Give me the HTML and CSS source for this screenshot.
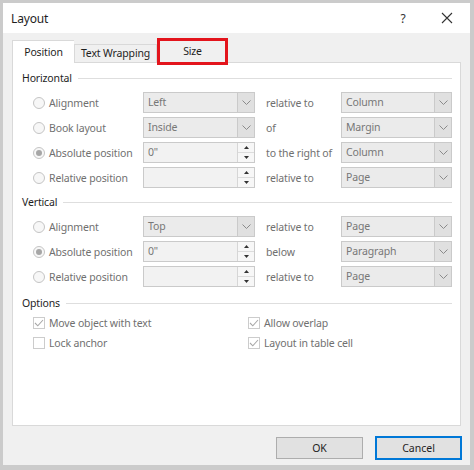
FILE: index.html
```html
<!DOCTYPE html>
<html lang="en">
<head>
    <meta charset="UTF-8">
    <meta name="viewport" content="width=device-width, initial-scale=1.0">
    <title>Layout</title>
    <link rel="stylesheet" href="styles.css">
</head>
<body>
    <div class="dialog">
        <div class="titlebar">
            <span class="title">Layout</span>
            <span class="help">?</span>
            <span class="close">
                <svg width="12" height="12" viewBox="0 0 12 12"><path d="M1 1 L11 11 M11 1 L1 11" stroke="#333" stroke-width="1.1" fill="none"/></svg>
            </span>
        </div>

        <div class="tabs">
            <div class="tab active">Position</div>
            <div class="tab">Text Wrapping</div>
            <div class="tab marked">Size</div>
        </div>

        <div class="panel">
            <div class="heading"><span>Horizontal</span><i></i></div>
            <div class="row">
                <label class="opt"><span class="radio"></span>Alignment</label>
                <div class="combo"><span class="val">Left</span><span class="drop"><svg width="9" height="5" viewBox="0 0 9 5"><path d="M0.5 0.5 L4.5 4.5 L8.5 0.5" stroke="#8a8a8a" fill="none"/></svg></span></div>
                <span class="rel">relative to</span>
                <div class="combo"><span class="val">Column</span><span class="drop"><svg width="9" height="5" viewBox="0 0 9 5"><path d="M0.5 0.5 L4.5 4.5 L8.5 0.5" stroke="#8a8a8a" fill="none"/></svg></span></div>
            </div>
            <div class="row">
                <label class="opt"><span class="radio"></span>Book layout</label>
                <div class="combo"><span class="val">Inside</span><span class="drop"><svg width="9" height="5" viewBox="0 0 9 5"><path d="M0.5 0.5 L4.5 4.5 L8.5 0.5" stroke="#8a8a8a" fill="none"/></svg></span></div>
                <span class="rel">of</span>
                <div class="combo"><span class="val">Margin</span><span class="drop"><svg width="9" height="5" viewBox="0 0 9 5"><path d="M0.5 0.5 L4.5 4.5 L8.5 0.5" stroke="#8a8a8a" fill="none"/></svg></span></div>
            </div>
            <div class="row">
                <label class="opt"><span class="radio checked"></span>Absolute position</label>
                <div class="spin"><span class="val">0"</span><span class="arrows"><span><svg width="5" height="3" viewBox="0 0 5 3"><path d="M0 3 L2.5 0 L5 3 Z" fill="#333"/></svg></span><span><svg width="5" height="3" viewBox="0 0 5 3"><path d="M0 0 L2.5 3 L5 0 Z" fill="#333"/></svg></span></span></div>
                <span class="rel">to the right of</span>
                <div class="combo"><span class="val">Column</span><span class="drop"><svg width="9" height="5" viewBox="0 0 9 5"><path d="M0.5 0.5 L4.5 4.5 L8.5 0.5" stroke="#8a8a8a" fill="none"/></svg></span></div>
            </div>
            <div class="row">
                <label class="opt"><span class="radio"></span>Relative position</label>
                <div class="spin"><span class="val"></span><span class="arrows"><span><svg width="5" height="3" viewBox="0 0 5 3"><path d="M0 3 L2.5 0 L5 3 Z" fill="#333"/></svg></span><span><svg width="5" height="3" viewBox="0 0 5 3"><path d="M0 0 L2.5 3 L5 0 Z" fill="#333"/></svg></span></span></div>
                <span class="rel">relative to</span>
                <div class="combo"><span class="val">Page</span><span class="drop"><svg width="9" height="5" viewBox="0 0 9 5"><path d="M0.5 0.5 L4.5 4.5 L8.5 0.5" stroke="#8a8a8a" fill="none"/></svg></span></div>
            </div>

            <div class="heading second"><span>Vertical</span><i></i></div>
            <div class="row">
                <label class="opt"><span class="radio"></span>Alignment</label>
                <div class="combo"><span class="val">Top</span><span class="drop"><svg width="9" height="5" viewBox="0 0 9 5"><path d="M0.5 0.5 L4.5 4.5 L8.5 0.5" stroke="#8a8a8a" fill="none"/></svg></span></div>
                <span class="rel">relative to</span>
                <div class="combo"><span class="val">Page</span><span class="drop"><svg width="9" height="5" viewBox="0 0 9 5"><path d="M0.5 0.5 L4.5 4.5 L8.5 0.5" stroke="#8a8a8a" fill="none"/></svg></span></div>
            </div>
            <div class="row">
                <label class="opt"><span class="radio checked"></span>Absolute position</label>
                <div class="spin"><span class="val">0"</span><span class="arrows"><span><svg width="5" height="3" viewBox="0 0 5 3"><path d="M0 3 L2.5 0 L5 3 Z" fill="#333"/></svg></span><span><svg width="5" height="3" viewBox="0 0 5 3"><path d="M0 0 L2.5 3 L5 0 Z" fill="#333"/></svg></span></span></div>
                <span class="rel">below</span>
                <div class="combo"><span class="val">Paragraph</span><span class="drop"><svg width="9" height="5" viewBox="0 0 9 5"><path d="M0.5 0.5 L4.5 4.5 L8.5 0.5" stroke="#8a8a8a" fill="none"/></svg></span></div>
            </div>
            <div class="row">
                <label class="opt"><span class="radio"></span>Relative position</label>
                <div class="spin"><span class="val"></span><span class="arrows"><span><svg width="5" height="3" viewBox="0 0 5 3"><path d="M0 3 L2.5 0 L5 3 Z" fill="#333"/></svg></span><span><svg width="5" height="3" viewBox="0 0 5 3"><path d="M0 0 L2.5 3 L5 0 Z" fill="#333"/></svg></span></span></div>
                <span class="rel">relative to</span>
                <div class="combo"><span class="val">Page</span><span class="drop"><svg width="9" height="5" viewBox="0 0 9 5"><path d="M0.5 0.5 L4.5 4.5 L8.5 0.5" stroke="#8a8a8a" fill="none"/></svg></span></div>
            </div>

            <div class="heading third"><span>Options</span><i></i></div>
            <div class="checks">
                <label class="opt"><span class="box"><svg width="10" height="8" viewBox="0 0 10 8"><path d="M1 4 L3.8 6.8 L9 1" stroke="#a8a8a8" stroke-width="1.1" fill="none"/></svg></span>Move object with text</label>
                <label class="opt"><span class="box"><svg width="10" height="8" viewBox="0 0 10 8"><path d="M1 4 L3.8 6.8 L9 1" stroke="#a8a8a8" stroke-width="1.1" fill="none"/></svg></span>Allow overlap</label>
                <label class="opt"><span class="box"></span>Lock anchor</label>
                <label class="opt"><span class="box"><svg width="10" height="8" viewBox="0 0 10 8"><path d="M1 4 L3.8 6.8 L9 1" stroke="#a8a8a8" stroke-width="1.1" fill="none"/></svg></span>Layout in table cell</label>
            </div>
        </div>

        <div class="footer">
            <button class="btn">OK</button>
            <button class="btn default">Cancel</button>
        </div>
    </div>
</body>
</html>
```

FILE: styles.css
```css
body {
    margin: 0;
    padding: 3px;
    background: #cbcbcb;
    font-family: "Noto Sans", "Open Sans", sans-serif;
    font-size: 10.5px;
    letter-spacing: -0.15px;
    color: #1e1e1e;
}
.dialog {
    width: 467px;
    height: 462px;
    background: #f0f0f0;
    display: flex;
    flex-direction: column;
}
.titlebar {
    height: 30px;
    background: #ffffff;
    display: flex;
    align-items: center;
    flex-shrink: 0;
}
.title {
    font-size: 12px;
    padding-left: 8px;
    flex: 1;
}
.help {
    font-size: 12px;
    color: #333;
    width: 12px;
    text-align: center;
    margin-right: 32px;
}
.close {
    display: flex;
    width: 12px;
    margin-right: 17px;
}
.tabs {
    height: 29px;
    display: flex;
    align-items: flex-end;
    padding-left: 9px;
    position: relative;
    z-index: 1;
    flex-shrink: 0;
}
.tab {
    width: 83px;
    height: 18px;
    line-height: 17px;
    background: #f0f0f0;
    border: 1px solid #d9d9d9;
    border-bottom: none;
    box-sizing: border-box;
    text-align: center;
}
.tab.active {
    height: 23px;
    line-height: 23px;
    width: 62px;
    background: #ffffff;
    margin-bottom: -1px;
    border-right: none;
}
.tab.marked {
    width: 65px;
    height: 21px;
    line-height: 21px;
    margin-left: 3px;
    border: none;
    outline: 3px solid #e3141c;
}
.panel {
    margin-left: 9px;
    width: 449px;
    height: 364px;
    box-sizing: border-box;
    background: #ffffff;
    border: 1px solid #d9d9d9;
    padding: 7px 8px 0 9px;
    flex-shrink: 0;
}
.heading {
    display: flex;
    align-items: center;
    height: 16px;
    margin-bottom: 4px;
}
.heading i {
    flex: 1;
    height: 1px;
    background: #dedede;
    margin-left: 6px;
}
.heading.second {
    margin-top: 4px;
}
.heading.third {
    margin-top: 6px;
    margin-bottom: 2px;
}
.row {
    display: grid;
    grid-template-columns: 110px 112px 86px 111px;
    align-items: center;
    height: 25px;
    margin-left: 11px;
}
.opt {
    display: flex;
    align-items: center;
    color: #707070;
}
.radio {
    width: 12px;
    height: 12px;
    box-sizing: border-box;
    border: 1px solid #c4c4c4;
    border-radius: 50%;
    background: #f7f7f7;
    margin-right: 4px;
    display: flex;
    align-items: center;
    justify-content: center;
}
.radio.checked::after {
    content: "";
    width: 6px;
    height: 6px;
    border-radius: 50%;
    background: #a6a6a6;
}
.combo, .spin {
    height: 21px;
    box-sizing: border-box;
    border: 1px solid #cacaca;
    background: #ebebeb;
    display: flex;
    color: #777;
}
.spin {
    background: #f2f2f2;
}
.val {
    flex: 1;
    line-height: 19px;
    padding-left: 4px;
}
.drop {
    width: 16px;
    border-left: 1px solid #cacaca;
    background: #e0e0e0;
    display: flex;
    align-items: center;
    justify-content: center;
}
.arrows {
    width: 16px;
    border-left: 1px solid #d6d6d6;
    background: #f7f7f7;
    display: flex;
    flex-direction: column;
}
.arrows span {
    flex: 1;
    display: flex;
    align-items: center;
    justify-content: center;
}
.arrows span + span {
    border-top: 1px solid #dcdcdc;
}
.rel {
    color: #707070;
    padding-left: 11px;
}
.checks {
    display: grid;
    grid-template-columns: 215px auto;
    grid-auto-rows: 20px;
    align-items: center;
    margin-left: 11px;
}
.box {
    width: 12px;
    height: 12px;
    box-sizing: border-box;
    border: 1px solid #cccccc;
    background: #ffffff;
    margin-right: 4px;
    display: flex;
    align-items: center;
    justify-content: center;
}
.footer {
    display: flex;
    justify-content: flex-end;
    align-items: center;
    gap: 12px;
    padding: 10px 8px 0 0;
    height: 24px;
}
.btn {
    width: 87px;
    height: 22px;
    font-family: inherit;
    font-size: 10.5px;
    color: #1e1e1e;
    background: #e1e1e1;
    border: 1px solid #adadad;
    padding: 0;
}
.btn.default {
    height: 24px;
    border: 2px solid #0078d7;
}
```
